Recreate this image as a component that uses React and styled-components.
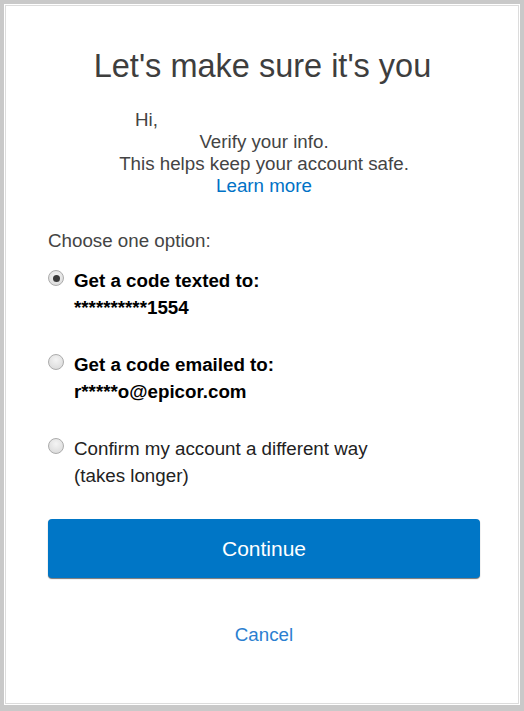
import React, { useState } from 'react'
import styled, { createGlobalStyle } from 'styled-components'

const GlobalStyle = createGlobalStyle`
  html, body {
    margin: 0;
    padding: 0;
    background: #c9c9c9;
  }
  body {
    font-family: "Liberation Sans", Arial, sans-serif;
  }
`

const options = [
  { id: 'sms', title: 'Get a code texted to:', detail: '**********1554', bold: true },
  { id: 'email', title: 'Get a code emailed to:', detail: 'r*****o@epicor.com', bold: true },
  { id: 'other', title: 'Confirm my account a different way', detail: '(takes longer)', bold: false }
]

export default function App() {
  const [selected, setSelected] = useState('sms')

  return (
    <Frame>
      <GlobalStyle />
      <Card>
        <Title>Let's make sure it's you</Title>
        <Intro>
          <Greeting>Hi,</Greeting>
          <Line>Verify your info.</Line>
          <Line>This helps keep your account safe.</Line>
          <Line>
            <Link href="#">Learn more</Link>
          </Line>
        </Intro>
        <Prompt>Choose one option:</Prompt>
        <OptionList>
          {options.map(opt => (
            <Option key={opt.id} onClick={() => setSelected(opt.id)}>
              <Radio checked={selected === opt.id} />
              <OptionText bold={opt.bold}>
                <div>{opt.title}</div>
                <div>{opt.detail}</div>
              </OptionText>
            </Option>
          ))}
        </OptionList>
        <Button type="button">Continue</Button>
        <Cancel href="#">Cancel</Cancel>
      </Card>
    </Frame>
  )
}

const Frame = styled.div`
  box-sizing: border-box;
  height: 711px;
  padding: 5px 5px 7px 5px;
`
const Card = styled.div`
  box-sizing: border-box;
  height: 100%;
  background: #fff;
  border: 1px solid #dcdcdc;
  box-shadow: 0 0 0 1px #fff;
  padding: 40px 38px 0 42px;
  display: flex;
  flex-direction: column;
`
const Title = styled.h1`
  margin: 0;
  font-weight: normal;
  font-size: 32.5px;
  line-height: 40px;
  color: #3e3e3e;
  text-align: center;
  margin-left: -3px;
`
const Intro = styled.div`
  margin-top: 23px;
  font-size: 18.75px;
  line-height: 22px;
  color: #444;
  text-align: center;
`
const Line = styled.div``
const Greeting = styled.div`
  text-align: left;
  padding-left: 87px;
`
const Link = styled.a`
  color: #0072c6;
  text-decoration: none;
`
const Prompt = styled.div`
  margin-top: 33px;
  font-size: 18.75px;
  line-height: 22px;
  color: #444;
`
const OptionList = styled.div`
  margin-top: 15px;
  display: flex;
  flex-direction: column;
  gap: 30px;
`
const Option = styled.label`
  display: flex;
  align-items: flex-start;
  gap: 10px;
  cursor: pointer;
`
const Radio = styled.span`
  flex: none;
  box-sizing: border-box;
  width: 16px;
  height: 16px;
  margin-top: 3px;
  border-radius: 50%;
  border: 1px solid #acacac;
  background: radial-gradient(circle at 50% 35%, #f4f4f4 0%, #d6d6d6 100%);
  position: relative;
  &::after {
    content: '';
    display: ${p => (p.checked ? 'block' : 'none')};
    position: absolute;
    left: 3.5px;
    top: 3.5px;
    width: 7px;
    height: 7px;
    border-radius: 50%;
    background: #3a3a3a;
  }
`
const OptionText = styled.div`
  font-size: 18.75px;
  line-height: 27px;
  font-weight: ${p => (p.bold ? 'bold' : 'normal')};
  color: ${p => (p.bold ? '#000' : '#222')};
`
const Button = styled.button`
  margin-top: 30px;
  height: 59px;
  width: 100%;
  border: none;
  border-radius: 4px;
  background: #0076c6;
  box-shadow: 0 1px 1px rgba(0, 0, 0, 0.55);
  color: #fff;
  font-family: inherit;
  font-size: 21px;
  cursor: pointer;
`
const Cancel = styled.a`
  margin-top: 46px;
  align-self: center;
  font-size: 18.75px;
  line-height: 22px;
  color: #2b7fd0;
  text-decoration: none;
`
